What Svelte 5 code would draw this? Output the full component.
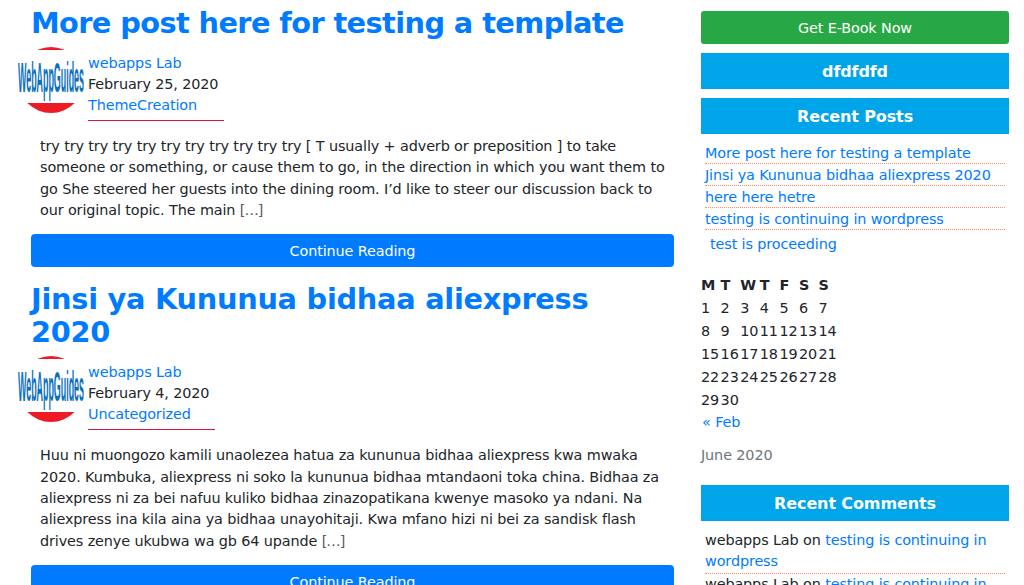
<script>
  const posts = [
    {
      title: 'More post here for testing a template',
      date: 'February 25, 2020',
      category: 'ThemeCreation',
      excerpt: 'try try try try try try try try try try try [ T usually + adverb or preposition ] to take someone or something, or cause them to go, in the direction in which you want them to go She steered her guests into the dining room. I’d like to steer our discussion back to our original topic. The main '
    },
    {
      title: 'Jinsi ya Kununua bidhaa aliexpress 2020',
      date: 'February 4, 2020',
      category: 'Uncategorized',
      excerpt: 'Huu ni muongozo kamili unaolezea hatua za kununua bidhaa aliexpress kwa mwaka 2020. Kumbuka, aliexpress ni soko la kununua bidhaa mtandaoni toka china. Bidhaa za aliexpress ni za bei nafuu kuliko bidhaa zinazopatikana kwenye masoko ya ndani. Na aliexpress ina kila aina ya bidhaa unayohitaji. Kwa mfano hizi ni bei za sandisk flash drives zenye ukubwa wa gb 64 upande '
    }
  ]

  const recent = [
    'More post here for testing a template',
    'Jinsi ya Kununua bidhaa aliexpress 2020',
    'here here hetre',
    'testing is continuing in wordpress'
  ]

  const days = ['M', 'T', 'W', 'T', 'F', 'S', 'S']
  const weeks = [
    [1, 2, 3, 4, 5, 6, 7],
    [8, 9, 10, 11, 12, 13, 14],
    [15, 16, 17, 18, 19, 20, 21],
    [22, 23, 24, 25, 26, 27, 28],
    [29, 30]
  ]
</script>

<div class="page">
  <main class="content">
    {#each posts as post}
      <article class="post">
        <h2 class="title"><a href="#top">{post.title}</a></h2>
        <div class="meta">
          <svg class="avatar" viewBox="0 0 66 66" width="66" height="66">
            <circle cx="33" cy="33" r="33" fill="#ed1c24" />
            <rect x="0" y="3" width="66" height="53" fill="#fff" />
            <text x="0" y="45" textLength="66" lengthAdjust="spacingAndGlyphs" class="logo-text">WebAppGuides</text>
          </svg>
          <div class="meta-text">
            <div class="meta-line"><a href="#top">webapps Lab</a></div>
            <div class="meta-line">{post.date}</div>
            <div class="meta-line"><a href="#top">{post.category}</a></div>
          </div>
        </div>
        <p class="excerpt">{post.excerpt}<span class="more">[…]</span></p>
        <a class="read-more" href="#top">Continue Reading</a>
      </article>
    {/each}
  </main>

  <aside class="sidebar">
    <a class="ebook" href="#top">Get E-Book Now</a>
    <h3 class="widget-title">dfdfdfd</h3>
    <h3 class="widget-title">Recent Posts</h3>
    <ul class="recent">
      {#each recent as item}
        <li><a href="#top">{item}</a></li>
      {/each}
    </ul>
    <div class="extra"><a href="#top">test is proceeding</a></div>

    <table class="calendar">
      <thead>
        <tr>
          {#each days as d}<th>{d}</th>{/each}
        </tr>
      </thead>
      <tbody>
        {#each weeks as week}
          <tr>
            {#each week as n}<td>{n}</td>{/each}
          </tr>
        {/each}
      </tbody>
    </table>
    <div class="prev"><a href="#top">« Feb</a></div>
    <div class="caption">June 2020</div>

    <h3 class="widget-title comments-title">Recent Comments</h3>
    <ul class="comments">
      <li>webapps Lab on <a href="#top">testing is continuing in wordpress</a></li>
      <li>webapps Lab on <a href="#top">testing is continuing in wordpress</a></li>
    </ul>
  </aside>
</div>

<style>
  :global(body) {
    margin: 0;
    background: #fff;
    overflow: hidden;
  }

  .page {
    display: flex;
    height: 585px;
    overflow: hidden;
    font-family: "DejaVu Sans", sans-serif;
    font-size: 14.4px;
    line-height: 21.6px;
    letter-spacing: -0.12px;
    color: #212529;
  }

  a {
    color: #007bff;
    text-decoration: none;
  }

  .content {
    width: 643px;
    margin-left: 31px;
    flex-shrink: 0;
  }

  .title {
    margin: 7px 0 7px;
    font-size: 28.8px;
    line-height: 33px;
    font-weight: 700;
    letter-spacing: -0.6px;
  }

  .post:nth-child(2) .title {
    letter-spacing: -0.27px;
  }

  .meta {
    display: flex;
    margin-left: -13px;
  }

  .avatar {
    flex-shrink: 0;
    display: block;
  }

  .logo-text {
    font-family: "Liberation Sans", sans-serif;
    font-size: 42px;
    font-weight: 700;
    letter-spacing: 0;
    fill: #0a6fc2;
  }

  .meta-text {
    margin-left: 4px;
    padding: 6px 6px 0 0;
    border-bottom: 1px solid #dc143c;
    box-sizing: border-box;
    height: 74px;
  }

  .meta-line {
    height: 21px;
  }

  .excerpt {
    margin: 15px 0 13px 9px;
    width: 630px;
    line-height: 21.33px;
  }

  .more {
    color: #555b61;
    letter-spacing: -1px;
  }

  .read-more {
    display: block;
    height: 33px;
    line-height: 34px;
    text-align: center;
    background: #007bff;
    color: #fff;
    border-radius: 4px;
    margin-bottom: 16px;
  }

  .sidebar {
    width: 308px;
    margin-left: 27px;
    flex-shrink: 0;
    padding-top: 11px;
  }

  .ebook {
    display: block;
    height: 33px;
    line-height: 34px;
    text-align: center;
    background: #28a745;
    color: #fff;
    border-radius: 3px;
    margin-bottom: 9px;
  }

  .widget-title {
    margin: 0 0 9px;
    height: 36px;
    line-height: 37px;
    text-align: center;
    background: #00a4e8;
    color: #fff;
    font-size: 16px;
    font-weight: 700;
  }

  .recent {
    list-style: none;
    margin: 0;
    padding: 0 4px;
  }

  .recent li {
    height: 20px;
    line-height: 21px;
    margin-bottom: 1px;
    border-bottom: 1px dotted #ff8a65;
  }

  .extra {
    margin: 4px 0 0 9px;
  }

  .calendar {
    border-collapse: collapse;
    margin-top: 19px;
  }

  .calendar th,
  .calendar td {
    padding: 0;
    width: 19.6px;
    height: 23px;
    text-align: left;
    font-weight: 400;
    white-space: nowrap;
  }

  .calendar th {
    font-weight: 700;
  }

  .prev {
    margin-top: -1px;
    margin-left: 1px;
  }

  .caption {
    margin-top: 12px;
    color: #6c757d;
  }

  .comments-title {
    margin-top: 18px;
  }

  .comments {
    list-style: none;
    margin: 0;
    padding: 0 4px;
  }

  .comments li {
    border-bottom: 1px dotted #ff8a65;
  }
</style>
